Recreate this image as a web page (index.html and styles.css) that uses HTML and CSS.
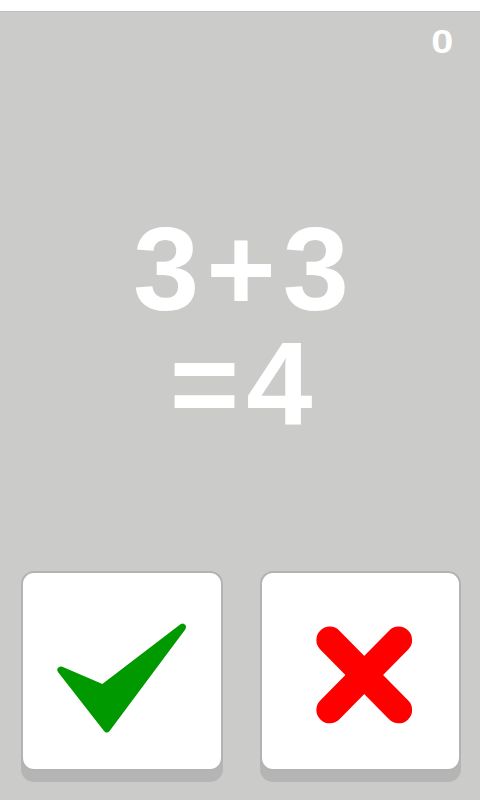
FILE: index.html
```html
<!DOCTYPE html>
<html>
<head>
<meta charset="utf-8">
<link rel="stylesheet" href="styles.css">
</head>
<body>
<div class="screen">
  <div class="score"><span class="score-num">0</span></div>
  <div class="equation">3+3<br>=4</div>
  <div class="buttons">
    <div class="btn">
      <svg class="icon" viewBox="0 0 198 196">
        <polygon points="38,97 80,115 160,54 84,156" fill="#009900" stroke="#009900" stroke-width="7" stroke-linejoin="round"/>
      </svg>
    </div>
    <div class="btn">
      <svg class="icon" viewBox="0 0 198 196">
        <g stroke="#ff0000" stroke-width="27" stroke-linecap="round">
          <line x1="68" y1="67" x2="137" y2="137"/>
          <line x1="137" y1="67" x2="68" y2="137"/>
        </g>
      </svg>
    </div>
  </div>
</div>
</body>
</html>
```
FILE: styles.css
```css
html, body {
  margin: 0;
  padding: 0;
  background: #ffffff;
}
body {
  padding-top: 11px;
  font-family: "Liberation Sans", Arial, sans-serif;
}
.screen {
  height: 789px;
  background: #cbcbca;
  border-top: 1px solid #bdbdbc;
  box-sizing: border-box;
  display: flex;
  flex-direction: column;
}
.score {
  color: #ffffff;
  font-weight: bold;
  font-size: 33px;
  line-height: 32px;
  text-align: right;
  padding: 14px 27px 0 0;
}
.score-num {
  display: inline-block;
  transform: scaleX(1.2);
  transform-origin: right center;
}
.equation {
  margin-top: 153px;
  color: #ffffff;
  font-weight: bold;
  font-size: 119px;
  line-height: 115px;
  letter-spacing: 7px;
  text-align: center;
  padding-left: 9px;
}
.buttons {
  margin-top: 130px;
  display: flex;
  gap: 37px;
  padding: 0 19px 0 21px;
}
.btn {
  flex: 1;
  height: 200px;
  box-sizing: border-box;
  background: #ffffff;
  border: 2px solid #b3b3b3;
  border-radius: 13px;
  box-shadow: 0 11px 0 #b5b5b5;
}
.icon {
  display: block;
  width: 100%;
  height: 100%;
}
```
